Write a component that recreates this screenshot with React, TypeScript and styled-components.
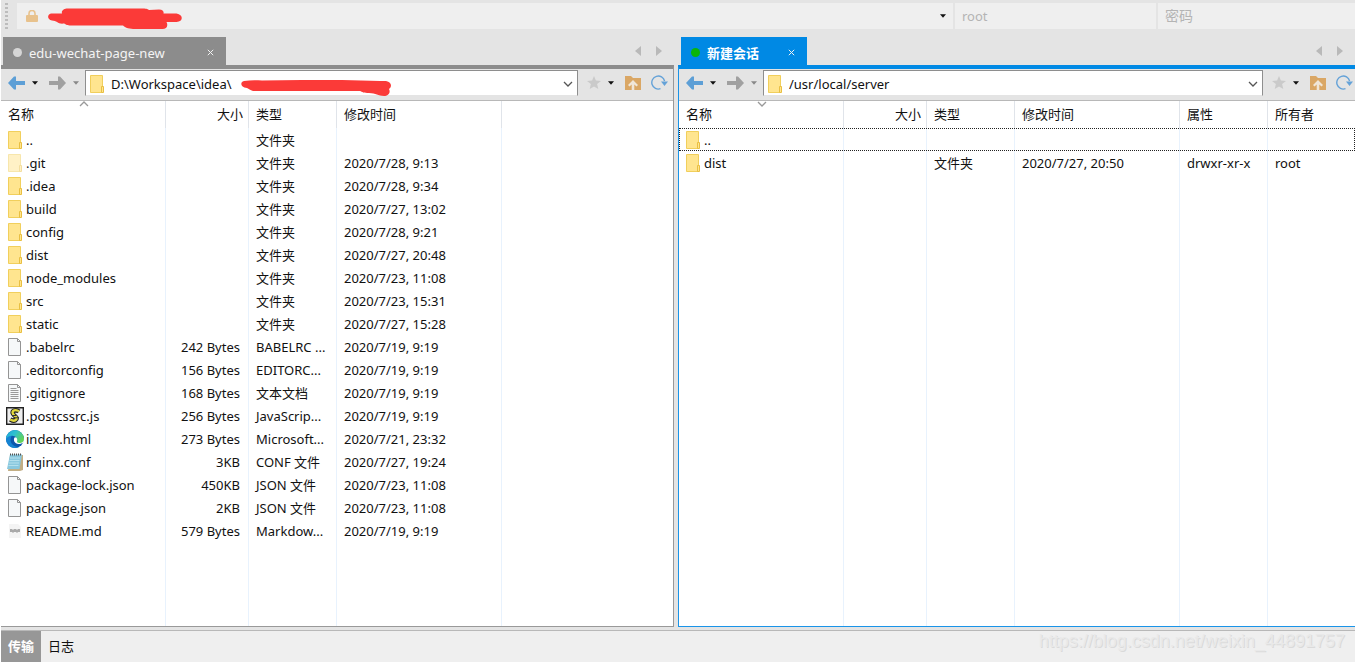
import React from "react";
import styled, { createGlobalStyle, css } from "styled-components";

const GREY = "#8c8c8c";
const BLUE = "#0089e4";
const COLUMN_LINE = "#e8f2fd";

const GlobalStyle = createGlobalStyle`
  *, *::before, *::after { box-sizing: border-box; }
  body {
    margin: 0;
    background: #fff;
    color: #111;
    font: 13px/18px "Noto Sans", "Noto Sans CJK SC", sans-serif;
  }
  button, input { font: inherit; color: inherit; }
  svg { display: block; flex: none; }
`;

const Window = styled.main`
  display: flex;
  flex-direction: column;
  min-height: 100vh;
  margin: 0 2px 0 1px;
  background: #e4e4e4;
`;

const ConnectBar = styled.form`
  display: grid;
  grid-template-columns: 12px minmax(0, 1fr) 201px 197px;
  gap: 2px;
  height: 29px;
  padding: 3px 0 0 2px;
`;

const Grip = styled.span`
  width: 3px;
  margin-left: 2px;
  background: repeating-linear-gradient(#bcbcbc 0 2px, transparent 2px 4px);
`;

const Field = styled.label`
  position: relative;
  display: flex;
  align-items: center;
  gap: 8px;
  padding: 0 7px;
  background: #efefef;
`;

const HostField = styled(Field)`
  padding-left: 9px;
`;

const TextInput = styled.input`
  flex: 1;
  min-width: 0;
  width: 100%;
  padding: 0;
  border: 0;
  outline: 0;
  background: transparent;
`;

const FadedInput = styled(TextInput)`
  color: #b4b4b4;
  &::placeholder { color: #b4b4b4; opacity: 1; font-size: 14px; }
`;

const IconButton = styled.button`
  display: flex;
  align-items: center;
  justify-content: center;
  padding: 0;
  border: 0;
  background: transparent;
`;

const Panels = styled.div`
  display: grid;
  grid-template-columns: minmax(0, 673fr) minmax(0, 677fr);
  gap: 4px;
  flex: 1;
  padding-top: 8px;
`;

const Pane = styled.section`
  display: flex;
  flex-direction: column;
`;

const TabStrip = styled.div<{ $active?: boolean }>`
  display: flex;
  align-items: stretch;
  height: 28px;
  padding: 0 8px 0 ${(p) => (p.$active ? 3 : 2)}px;
`;

const Tab = styled.button<{ $active?: boolean }>`
  display: flex;
  align-items: center;
  gap: 7px;
  width: ${(p) => (p.$active ? 126 : 223)}px;
  padding: 3px 12px 0 10px;
  border: 0;
  background: ${(p) => (p.$active ? BLUE : GREY)};
  color: ${(p) => (p.$active ? "#fff" : "#f4f4f4")};
  font-weight: ${(p) => (p.$active ? 700 : 400)};
  text-align: left;
`;

const Dot = styled.span<{ $active?: boolean }>`
  width: 9px;
  height: 9px;
  border-radius: 50%;
  background: ${(p) => (p.$active ? "#0ab50a" : "#d6d6d6")};
`;

const TabTitle = styled.span`
  flex: 1;
  white-space: nowrap;
`;

const TabArrows = styled.div`
  display: flex;
  gap: 15px;
  margin-left: auto;
  padding: 0 4px 0 0;
`;

const PaneFrame = styled.div<{ $active?: boolean }>`
  display: flex;
  flex: 1;
  flex-direction: column;
  border-top: 4px solid ${(p) => (p.$active ? BLUE : GREY)};
  border-bottom: 1px solid ${(p) => (p.$active ? "#1a94e8" : "#999")};
  ${(p) =>
    p.$active
      ? css`border-left: 1px solid #1a94e8;`
      : css`border-right: 1px solid #999;`}
`;

const PathBar = styled.div<{ $active?: boolean }>`
  display: flex;
  align-items: center;
  height: 32px;
  padding: 0 ${(p) => (p.$active ? 2 : 5)}px 4px 7px;
  border-bottom: 1px solid #b8b8b8;
`;

const History = styled.div`
  display: flex;
  width: 77px;
  gap: 7px;
`;

const ForwardButton = styled(IconButton)`
  margin-left: 4px;
`;

const PathField = styled.div`
  position: relative;
  display: flex;
  flex: 1;
  align-items: center;
  gap: 5px;
  align-self: flex-end;
  height: 26px;
  margin-right: 9px;
  padding: 2px 4px 0 2px;
  border: 1px solid #8e8e8e;
  border-bottom-color: #e4e4e4;
  background: #fff;
`;

const PathTools = styled.div`
  display: flex;
  align-items: center;
`;

const StarButton = styled(IconButton)`
  margin-right: 7px;
`;
const UpButton = styled(IconButton)`
  margin: 0 10px 0 11px;
`;

const FileArea = styled.div<{ $lines: number[] }>`
  flex: 1;
  background-color: #fff;
  background-repeat: no-repeat;
  background-size: 1px 100%;
  background-image: ${(p) =>
    p.$lines.map(() => `linear-gradient(${COLUMN_LINE}, ${COLUMN_LINE})`).join(", ")};
  background-position: ${(p) => p.$lines.map((x) => `${x}px 0`).join(", ")};
`;

const Table = styled.table`
  width: 100%;
  border-collapse: separate;
  border-spacing: 0;
  table-layout: fixed;
`;

const Col = styled.col<{ $w?: number }>`
  width: ${(p) => (p.$w ? `${p.$w}px` : "auto")};
`;

const Head = styled.th<{ $right?: boolean }>`
  position: relative;
  height: 27px;
  padding: 0 ${(p) => (p.$right ? 5 : 6)}px 2px 7px;
  border-right: 1px solid #e0e4ea;
  font-weight: 400;
  text-align: ${(p) => (p.$right ? "right" : "left")};
  &:last-child { border-right: 0; }
`;

const SortMark = styled.span`
  position: absolute;
  top: 0;
  left: 78px;
`;

const Row = styled.tr<{ $focused?: boolean }>`
  ${(p) =>
    p.$focused &&
    css`
      outline: 1px dotted #222;
      outline-offset: -1px;
    `}
`;

const Cell = styled.td<{ $right?: boolean }>`
  height: 23px;
  padding: 0 ${(p) => (p.$right ? 9 : 6)}px 0 7px;
  white-space: nowrap;
  text-align: ${(p) => (p.$right ? "right" : "left")};
`;

const FileName = styled.span`
  display: flex;
  align-items: center;
  gap: 2px;
  margin-left: -2px;
`;

const StatusBar = styled.footer`
  display: flex;
  align-items: stretch;
  height: 32px;
  margin-top: 3px;
  border-top: 1px solid #b8b8b8;
  background: #efefef;
`;

const StatusTab = styled.button<{ $active?: boolean }>`
  padding: 0 7px 1px;
  border: 0;
  background: ${(p) => (p.$active ? "#979797" : "transparent")};
  color: ${(p) => (p.$active ? "#fff" : "#111")};
  font-weight: ${(p) => (p.$active ? 700 : 400)};
`;

const Credit = styled.span`
  margin-left: auto;
  padding: 0 10px 10px 0;
  color: #e9e9e9;
  font: 18px/20px "Liberation Sans", sans-serif;
  text-shadow: 1px 1px 0 #dadada;
`;

const ScribbleSvg = styled.svg<{ $x: number; $y: number }>`
  position: absolute;
  left: ${(p) => p.$x}px;
  top: ${(p) => p.$y}px;
`;

const Caret = ({ color = "#111" }: { color?: string }) => (
  <svg width="6" height="4" viewBox="0 0 7 4">
    <path d="M0 0h7L3.5 4z" fill={color} />
  </svg>
);

const Side = ({ next }: { next?: boolean }) => (
  <svg width="6" height="10" viewBox="0 0 6 10">
    <path d={next ? "M0 0v10l6-5z" : "M6 0v10L0 5z"} fill="#b9b9b9" />
  </svg>
);

const Cross = () => (
  <svg width="7" height="7" viewBox="0 0 7 7">
    <path d="M.8.8l5.4 5.4M6.2.8L.8 6.2" stroke="#f2f2f2" strokeWidth="1" />
  </svg>
);

const Chevron = ({ up, color = "#555" }: { up?: boolean; color?: string }) => (
  <svg width="10" height="6" viewBox="0 0 10 6" fill="none">
    <path d={up ? "M1 5l4-4 4 4" : "M1 1l4 4 4-4"} stroke={color} strokeWidth="1.3" />
  </svg>
);

const Arrow = ({ forward }: { forward?: boolean }) => (
  <svg width="17" height="14" viewBox="0 0 17 14">
    <path
      d={forward ? "M0 5h9V.5h2L17 7l-6 6.500H9V9H0z" : "M17 5H8V.5H6L0 7l6 6.500h2V9h9z"}
      fill={forward ? "#a0a0a0" : "#5d9fd6"}
    />
  </svg>
);

const Lock = () => (
  <svg width="12" height="13" viewBox="0 0 12 13">
    <path d="M3 6V3.500a3 3 0 0 1 6 0V6" fill="none" stroke="#e8c28d" strokeWidth="1.600" />
    <rect y="5" width="12" height="7" rx="1" fill="#e8c28d" />
  </svg>
);

const Star = () => (
  <svg width="14" height="13" viewBox="0 0 14 13">
    <path d="M7 0l1.900 4.500 5.100.400-3.900 3.200L11.300 13 7 10.400 2.700 13l1.200-4.900L0 4.900l5.100-.4z" fill="#cacaca" />
  </svg>
);

const FolderUp = () => (
  <svg width="16" height="14" viewBox="0 0 16 14">
    <path d="M0 0h6l2 2h8v12H0z" fill="#daa765" />
    <path d="M8 4l5 5-1.500 1.500L9.300 8.500V14H6.700V8.500l-2.200 2L3 9z" fill="#f0e6d8" />
  </svg>
);

const Refresh = () => (
  <svg width="17" height="15" viewBox="0 0 17 15">
    <path d="M9.500 13.700A6.500 6.500 0 1 1 13.600 6" fill="none" stroke="#64a2d8" strokeWidth="1.400" />
    <path d="M10 6.500h7L13.500 11z" fill="#64a2d8" />
  </svg>
);

type IconKind = "folder" | "hidden" | "file" | "text" | "script" | "edge" | "notes" | "readme";

const FileIcon = ({ kind }: { kind: IconKind }) => {
  switch (kind) {
    case "folder":
    case "hidden":
      return (
        <svg width="18" height="18" viewBox="0 0 18 18" opacity={kind === "hidden" ? 0.5 : 1}>
          <path d="M2.500.5h12v17h-12z" fill="#ffe58f" stroke="#f1cf5c" />
          <path d="M13.500 11.500h2v6h-2z" fill="#ffe58f" stroke="#e9bf42" />
        </svg>
      );
    case "file":
    case "text":
      return (
        <svg width="18" height="18" viewBox="0 0 18 18">
          <path d="M2.500.5h9l3 3v14h-12z" fill="#f6f8f9" stroke="#949494" />
          <path d="M11.500.5v3h3" fill="none" stroke="#949494" />
          {kind === "text" && (
            <path d="M4.500 4.500h6M4.500 6.500h8M4.500 8.500h8M4.500 10.500h8M4.500 12.500h8M4.500 14.500h8" stroke="#9a9a9a" />
          )}
        </svg>
      );
    case "script":
      return (
        <svg width="18" height="18" viewBox="0 0 18 18">
          <path d="M.7.7h16.600v16.600H.7z" fill="#eeeeee" stroke="#222" strokeWidth="1.400" />
          <path d="M13 4.500C10 2 5 3.500 7 6.800s5 3 3.200 5.700c-1.300 1.800-4 1.200-6 0" fill="none" stroke="#222" strokeWidth="4.400" />
          <path d="M13 4.500C10 2 5 3.500 7 6.800s5 3 3.200 5.700c-1.300 1.800-4 1.200-6 0" fill="none" stroke="#e2d83e" strokeWidth="2.400" />
          <path d="M9 5.200h3M6 8.500h4M9 10.800h4M5 11.500h3" stroke="#333" />
        </svg>
      );
    case "edge":
      return (
        <svg width="18" height="18" viewBox="0 0 18 18">
          <defs>
            <linearGradient id="edgeTop" x1="0" y1="0" x2="1" y2=".5">
              <stop offset="0" stopColor="#1ca4dc" />
              <stop offset=".5" stopColor="#2fc0cf" />
              <stop offset="1" stopColor="#62d35a" />
            </linearGradient>
          </defs>
          <circle cx="9" cy="9" r="9" fill="#0d57ac" />
          <path d="M0 9c1-3 3.500-4 6-3.500C4 8 4 12 6.500 14.500 8.500 16.500 11 17 13 17c-6 3-13-1-13-8z" fill="#1583d2" />
          <path d="M8.500 7.500C7 10 8.500 14 12.500 14c2 0 3.700-.6 5.300-1.800V8.500L12 7z" fill="#fff" />
          <path d="M0 9a9 9 0 0 1 18 0c0 2.800-2.200 4-4.500 3.900-2.300-.1-3-1-2.400-2C12 8.500 9.500 5.600 6 5.700 3 5.900 1 7.200 0 9z" fill="url(#edgeTop)" />
        </svg>
      );
    case "notes":
      return (
        <svg width="18" height="18" viewBox="0 0 18 18">
          <path d="M4 2h13v15l-3 1H2z" fill="#c2ae84" />
          <path d="M4 1.500h12L13.500 16H1z" fill="#8ac8de" />
          <path d="M4 5h10M3.500 7.500h10M3 10h10M2.500 12.500h10" stroke="#b4e0ed" />
          <path d="M4 1.500h12" stroke="#555" strokeWidth="2" strokeDasharray="1 1" />
        </svg>
      );
    default:
      return (
        <svg width="18" height="18" viewBox="0 0 18 18">
          <path d="M3 2h9l3 3v11H3z" fill="#f4f4f4" />
          <path d="M5 7v3M7 7.500v3M9 7v3M11 7.500v3M13 7v3" stroke="#777" strokeWidth="1.200" />
        </svg>
      );
  }
};

type Entry = { icon: IconKind; cells: string[]; focused?: boolean };

const folder = (name: string, date: string, icon: IconKind = "folder"): Entry => ({
  icon,
  cells: [name, "", "文件夹", date],
});
const file = (icon: IconKind, ...cells: string[]): Entry => ({ icon, cells });

const localFiles: Entry[] = [
  folder("..", ""),
  folder(".git", "2020/7/28, 9:13", "hidden"),
  folder(".idea", "2020/7/28, 9:34"),
  folder("build", "2020/7/27, 13:02"),
  folder("config", "2020/7/28, 9:21"),
  folder("dist", "2020/7/27, 20:48"),
  folder("node_modules", "2020/7/23, 11:08"),
  folder("src", "2020/7/23, 15:31"),
  folder("static", "2020/7/27, 15:28"),
  file("file", ".babelrc", "242 Bytes", "BABELRC ...", "2020/7/19, 9:19"),
  file("file", ".editorconfig", "156 Bytes", "EDITORC...", "2020/7/19, 9:19"),
  file("text", ".gitignore", "168 Bytes", "文本文档", "2020/7/19, 9:19"),
  file("script", ".postcssrc.js", "256 Bytes", "JavaScrip...", "2020/7/19, 9:19"),
  file("edge", "index.html", "273 Bytes", "Microsoft...", "2020/7/21, 23:32"),
  file("notes", "nginx.conf", "3KB", "CONF 文件", "2020/7/27, 19:24"),
  file("file", "package-lock.json", "450KB", "JSON 文件", "2020/7/23, 11:08"),
  file("file", "package.json", "2KB", "JSON 文件", "2020/7/23, 11:08"),
  file("readme", "README.md", "579 Bytes", "Markdow...", "2020/7/19, 9:19"),
];

const remoteFiles: Entry[] = [
  { icon: "folder", cells: ["..", "", "", "", "", ""], focused: true },
  { icon: "folder", cells: ["dist", "", "文件夹", "2020/7/27, 20:50", "drwxr-xr-x", "root"] },
];

type PaneProps = {
  title: string;
  path: string;
  active?: boolean;
  headers: string[];
  widths: number[];
  entries: Entry[];
  children?: React.ReactNode;
};

function FilePane({ title, path, active, headers, widths, entries, children }: PaneProps) {
  const lines = widths.map((_, i) => widths.slice(0, i + 1).reduce((a, b) => a + b, 0) - 1);
  return (
    <Pane>
      <TabStrip $active={active}>
        <Tab type="button" $active={active}>
          <Dot $active={active} />
          <TabTitle>{title}</TabTitle>
          <Cross />
        </Tab>
        <TabArrows>
          <IconButton type="button" aria-label="Previous tab"><Side /></IconButton>
          <IconButton type="button" aria-label="Next tab"><Side next /></IconButton>
        </TabArrows>
      </TabStrip>
      <PaneFrame $active={active}>
        <PathBar $active={active}>
          <History>
            <IconButton type="button" aria-label="Back"><Arrow /></IconButton>
            <IconButton type="button" aria-label="Back history"><Caret /></IconButton>
            <ForwardButton type="button" aria-label="Forward"><Arrow forward /></ForwardButton>
            <IconButton type="button" aria-label="Forward history"><Caret color="#888" /></IconButton>
          </History>
          <PathField>
            <FileIcon kind="folder" />
            <TextInput aria-label="Path" defaultValue={path} />
            <IconButton type="button" aria-label="Show paths"><Chevron /></IconButton>
            {children}
          </PathField>
          <PathTools>
            <StarButton type="button" aria-label="Bookmark"><Star /></StarButton>
            <IconButton type="button" aria-label="Bookmarks"><Caret /></IconButton>
            <UpButton type="button" aria-label="Parent folder"><FolderUp /></UpButton>
            <IconButton type="button" aria-label="Refresh"><Refresh /></IconButton>
          </PathTools>
        </PathBar>
        <FileArea $lines={lines}>
          <Table>
            <colgroup>
              {widths.map((w, i) => <Col key={i} $w={w} />)}
              <Col />
            </colgroup>
            <thead>
              <tr>
                {headers.map((h, i) => (
                  <Head key={i} $right={i === 1} scope="col">
                    {h}
                    {i === 0 && <SortMark><Chevron up={!active} color="#999" /></SortMark>}
                  </Head>
                ))}
              </tr>
            </thead>
            <tbody>
              {entries.map((e) => (
                <Row key={e.cells[0]} $focused={e.focused}>
                  {headers.map((_, i) => (
                    <Cell key={i} $right={i === 1}>
                      {i === 0 ? (
                        <FileName><FileIcon kind={e.icon} />{e.cells[0]}</FileName>
                      ) : (
                        e.cells[i]
                      )}
                    </Cell>
                  ))}
                </Row>
              ))}
            </tbody>
          </Table>
        </FileArea>
      </PaneFrame>
    </Pane>
  );
}

export default function App() {
  return (
    <>
      <GlobalStyle />
      <Window>
        <ConnectBar>
          <Grip />
          <HostField>
            <Lock />
            <TextInput aria-label="Host" />
            <IconButton type="button" aria-label="Recent hosts"><Caret /></IconButton>
            <ScribbleSvg $x={30} $y={4} width="136" height="24" viewBox="0 0 136 24">
              <path
                d="M4 6.500h11C14 3 18 1 22 1.500h74c4 0 5 1 6 1.500l10-.500c4 0 5 2 4.500 4h13c7 1 7 8 0 8.500h-10c2 4 0 7-4 7H88c-5 0-10-1-12-3.500H24c-4 0-5-1-7-2-6 1-7-3-12-3-5-1-5-6-1-7z"
                fill="#fb3a38"
              />
            </ScribbleSvg>
          </HostField>
          <Field><FadedInput aria-label="User name" defaultValue="root" /></Field>
          <Field><FadedInput aria-label="Password" type="password" placeholder="密码" /></Field>
        </ConnectBar>
        <Panels>
          <FilePane
            title="edu-wechat-page-new"
            path={"D:\\Workspace\\idea\\"}
            headers={["名称", "大小", "类型", "修改时间", ""]}
            widths={[165, 83, 88, 165]}
            entries={localFiles}
          >
            <ScribbleSvg $x={153} $y={7} width="156" height="20" viewBox="0 0 156 20">
              <path
                d="M5 3c6-1 12-1 18-.500l40-.5h40l38 1h6c6 1 6 6 3 8 2 4-1 7-5 7-6 0-8-3-15-3-5 0-7-1-9-2H14c-3-1-4-2-6-3-7-1-7-6-3-7z"
                fill="#fb3a38"
              />
            </ScribbleSvg>
          </FilePane>
          <FilePane
            active
            title="新建会话"
            path="/usr/local/server"
            headers={["名称", "大小", "类型", "修改时间", "属性", "所有者"]}
            widths={[165, 83, 88, 165, 88]}
            entries={remoteFiles}
          />
        </Panels>
        <StatusBar>
          <StatusTab type="button" $active>传输</StatusTab>
          <StatusTab type="button">日志</StatusTab>
          <Credit>https://blog.csdn.net/weixin_44891757</Credit>
        </StatusBar>
      </Window>
    </>
  );
}
